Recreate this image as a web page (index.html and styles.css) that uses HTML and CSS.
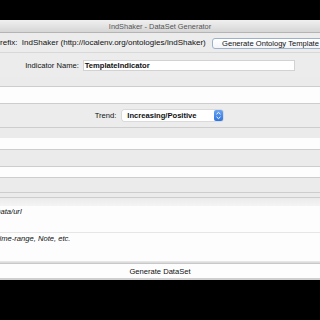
FILE: index.html
```html
<!DOCTYPE html>
<html>
<head>
<meta charset="utf-8">
<link rel="stylesheet" href="styles.css">
</head>
<body>
<div class="window">
  <div class="titlebar">IndShaker - DataSet Generator</div>
  <div class="row prefix-row">
    <span class="prefix">Prefix:&nbsp; IndShaker (http://localenv.org/ontologies/IndShaker)</span>
    <span class="btn">Generate Ontology Template</span>
  </div>
  <div class="row name-row">
    <span class="lbl">Indicator Name:</span>
    <span class="field">TemplateIndicator</span>
  </div>
  <div class="band g h9 bb"></div>
  <div class="band w h16 bb"></div>
  <div class="row trend-row bb">
    <span class="lbl">Trend:</span>
    <span class="combo"><span class="combo-text">Increasing/Positive</span><span class="stepper"><svg width="9" height="11" viewBox="0 0 9 11"><path d="M2.5 4.2 L4.5 2.4 L6.5 4.2 M2.5 6.8 L4.5 8.6 L6.5 6.8" fill="none" stroke="#fff" stroke-width="1"/></svg></span></span>
  </div>
  <div class="band g h10"></div>
  <div class="band w h11 bb"></div>
  <div class="band g h16 bb"></div>
  <div class="band w h10 bb"></div>
  <div class="band g h14 bb"></div>
  <div class="band g h4 bb"></div>
  <div class="band g2 h8"></div>
  <div class="area a1"><span class="ph">Data/url</span></div>
  <div class="area a2"><span class="ph">Time-range, Note, etc.</span></div>
  <div class="band sep3"></div>
  <div class="gen">Generate DataSet</div>
</div>
</body>
</html>
```

FILE: styles.css
```css
html, body {
  margin: 0;
  padding: 0;
  width: 320px;
  height: 320px;
  overflow: hidden;
  background: #000;
}
.window {
  margin-top: 20px;
  width: 320px;
  height: 260px;
  background: #ececec;
  font-family: "Liberation Sans", Arial, sans-serif;
  font-size: 7.6px;
  color: #111;
  overflow: hidden;
}
.titlebar {
  height: 12px;
  line-height: 13px;
  font-size: 7.4px;
  text-align: center;
  color: #555;
  background: linear-gradient(#f0f0f0, #d6d6d6);
  border-bottom: 1px solid #b4b4b4;
}
.row {
  display: flex;
  align-items: center;
}
.prefix-row {
  height: 19px;
  justify-content: space-between;
  border-bottom: 1px solid #d8d8d8;
}
.prefix {
  margin-left: -5.3px;
  font-size: 8px;
  white-space: nowrap;
}
.btn {
  box-sizing: border-box;
  height: 11px;
  width: 114px;
  margin-right: -6px;
  margin-top: 1px;
  padding-left: 9px;
  line-height: 10px;
  background: linear-gradient(#ffffff, #f2f5f9);
  border: 1px solid #9fb1c8;
  border-radius: 3px;
  white-space: nowrap;
}
.name-row {
  height: 24px;
  justify-content: center;
  gap: 4px;
  padding-top: 1px;
  box-sizing: border-box;
}
.lbl {
  white-space: nowrap;
}
.field {
  box-sizing: border-box;
  width: 212px;
  height: 11px;
  line-height: 10px;
  padding-left: 1px;
  background: #fff;
  border: 1px solid #d2d2d2;
  font-weight: bold;
}
.band { width: 100%; }
.g { background: #ebebeb; }
.g2 { background: linear-gradient(#ebebeb, #f4f4f4); }
.w { background: #fdfdfd; }
.h4 { height: 4px; }
.h8 { height: 8px; }
.h9 { height: 9px; }
.h10 { height: 10px; }
.h11 { height: 11px; }
.h14 { height: 14px; }
.h16 { height: 16px; }
.bb { border-bottom: 1px solid #cdcdcd; }
.sep3 {
  height: 1px;
  background: #dcdcdc;
  border-top: 1px solid #e6e6e6;
  border-bottom: 1px solid #c8c8c8;
}
.trend-row {
  height: 24px;
  justify-content: center;
  gap: 6px;
  padding-right: 2px;
  box-sizing: border-box;
}
.combo {
  display: flex;
  align-items: center;
  width: 101px;
  height: 11px;
  background: #fff;
  border-radius: 2px;
  box-shadow: 0 0 0 0.5px #c8c8c8;
}
.combo-text {
  flex: 1;
  padding-left: 5px;
  font-weight: bold;
  white-space: nowrap;
}
.stepper {
  width: 9px;
  height: 11px;
  border-radius: 2px;
  background: linear-gradient(#6aa5f2, #2e74e0);
  display: flex;
}
.area {
  background: #fdfdfd;
  box-sizing: border-box;
}
.ph {
  font-style: italic;
  margin-left: -5px;
  display: block;
}
.a1 {
  height: 27px;
  padding-top: 1px;
  border-bottom: 1px solid #e6e6e6;
}
.a2 {
  height: 28px;
  padding-top: 1px;
}
.gen {
  height: 14px;
  line-height: 15px;
  text-align: center;
  background: #fdfdfd;
  border-bottom: 2px solid #cfcfcf;
}
```
